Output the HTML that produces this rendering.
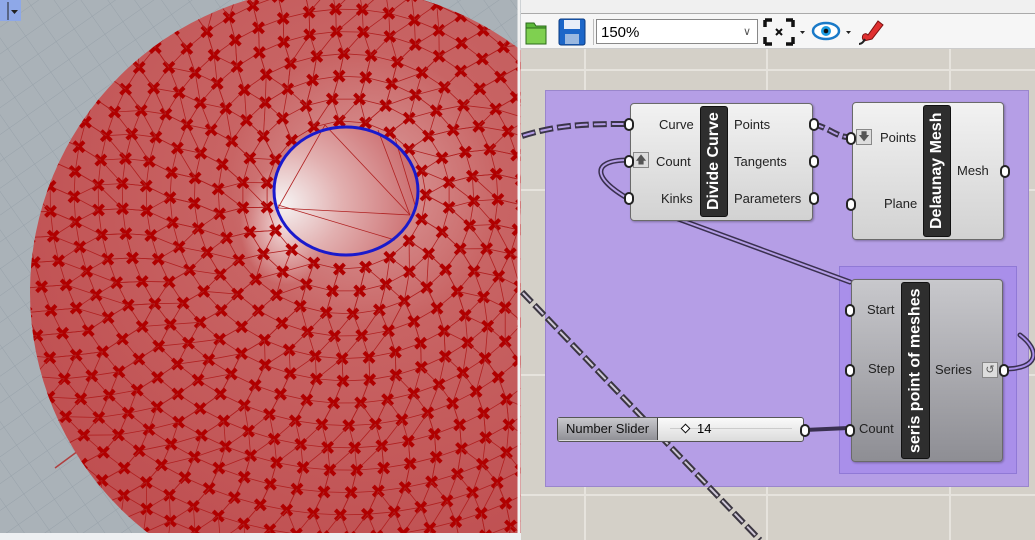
<!DOCTYPE html>
<html><head><meta charset="utf-8"><style>
html,body{margin:0;width:1035px;height:540px;overflow:hidden}
body{position:relative;font-family:"Liberation Sans",sans-serif;background:#d4d0c8}
.abs{position:absolute}
.comp{position:absolute;background:linear-gradient(#f2f2f2,#d2d2d2);border:1px solid #6a6a6a;border-radius:4px;box-shadow:1px 1px 2px rgba(0,0,0,.3)}
.bar{position:absolute;background:#2e2e2e;border:1px solid #111;border-radius:3px;color:#fff;font-weight:bold;font-size:16px;writing-mode:vertical-rl;transform:rotate(180deg);display:flex;align-items:center;justify-content:center;white-space:nowrap}
.lbl{position:absolute;font-size:13px;color:#222}
.port{position:absolute;width:6px;height:9px;border:2px solid #222;border-radius:5px;background:#fff}
</style></head><body>
<svg class="abs" style="left:0;top:0" width="521" height="540" viewBox="0 0 521 540">
<defs>
<pattern id="g" width="22" height="22" patternUnits="userSpaceOnUse" patternTransform="rotate(-35)">
<path d="M0 0H22M0 0V22" stroke="#98a2aa" stroke-width="1" fill="none"/></pattern>
<radialGradient id="dome" cx="0.55" cy="0.33" r="0.75">
<stop offset="0" stop-color="#dca0a0"/><stop offset="0.3" stop-color="#c86464"/><stop offset="1" stop-color="#bd4a4c"/></radialGradient>
<radialGradient id="hole" cx="0.05" cy="0.6" r="0.95">
<stop offset="0" stop-color="#f6f4f4"/><stop offset="0.45" stop-color="#e2b0b0"/><stop offset="1" stop-color="#cc6e70"/></radialGradient>
<radialGradient id="glow" cx="0.5" cy="0.5" r="0.5">
<stop offset="0" stop-color="#fff" stop-opacity="0.75"/><stop offset="1" stop-color="#fff" stop-opacity="0"/></radialGradient>
<clipPath id="dc"><circle cx="335" cy="292" r="305"/></clipPath>
</defs>
<rect width="521" height="540" fill="#aab2b8"/>
<rect width="521" height="540" fill="url(#g)"/>
<line x1="55" y1="468" x2="120" y2="420" stroke="#b04040" stroke-width="1.5"/>
<circle cx="335" cy="292" r="305" fill="url(#dome)"/>
<ellipse cx="285" cy="225" rx="45" ry="60" fill="url(#glow)"/>
<g id="mesh" clip-path="url(#dc)" stroke="#b02020" stroke-width="0.8" fill="none"></g>
<ellipse cx="346" cy="191" rx="72" ry="63" fill="url(#hole)"/>
<g stroke="#b02020" stroke-width="0.8">
<line x1="325" y1="125" x2="278" y2="208"/><line x1="325" y1="125" x2="410" y2="215"/><line x1="278" y1="208" x2="410" y2="215"/><line x1="278" y1="205" x2="395" y2="240"/><line x1="378" y1="130" x2="410" y2="215"/><line x1="395" y1="138" x2="415" y2="205"/>
</g>
<ellipse cx="346" cy="191" rx="72" ry="64" fill="none" stroke="#1a1acc" stroke-width="3"/>
<line x1="519" y1="0" x2="519" y2="540" stroke="#f2f2f2" stroke-width="3"/>
<rect x="0" y="533" width="521" height="7" fill="#eef0f2"/>
<rect x="0" y="0" width="21" height="21" fill="#8ea8e8"/>
<line x1="8" y1="2" x2="8" y2="20" stroke="#222"/>
<path d="M11 10h7l-3.5 4z" fill="#222"/>
</svg>
<script>
(function(){var g=document.getElementById('mesh');var s='';
var cx=346,cy=195;var prev=null;
for(var k=0;k<17;k++){var r=80+k*24;var n=Math.round(2*Math.PI*r/27);var pts=[];
for(var i=0;i<n;i++){var a=i/n*2*Math.PI+k*0.13;pts.push([cx+r*Math.cos(a),cy+r*Math.sin(a)*0.93]);}
for(var i=0;i<n;i++){var p=pts[i],q=pts[(i+1)%n];s+='<line x1="'+p[0].toFixed(1)+'" y1="'+p[1].toFixed(1)+'" x2="'+q[0].toFixed(1)+'" y2="'+q[1].toFixed(1)+'"/>';
if(prev){var best=null,bd=1e9;for(var j=0;j<prev.length;j++){var d=(prev[j][0]-p[0])**2+(prev[j][1]-p[1])**2;if(d<bd){bd=d;best=prev[j];}}
s+='<line x1="'+p[0].toFixed(1)+'" y1="'+p[1].toFixed(1)+'" x2="'+best[0].toFixed(1)+'" y2="'+best[1].toFixed(1)+'"/>';
var m=[(p[0]+q[0])/2,(p[1]+q[1])/2];bd=1e9;for(var j=0;j<prev.length;j++){var d=(prev[j][0]-m[0])**2+(prev[j][1]-m[1])**2;if(d<bd){bd=d;best=prev[j];}}
s+='<line x1="'+q[0].toFixed(1)+'" y1="'+q[1].toFixed(1)+'" x2="'+best[0].toFixed(1)+'" y2="'+best[1].toFixed(1)+'"/>';}}
for(var i=0;i<n;i++){var p=pts[i];s+='<path d="M'+(p[0]-5).toFixed(1)+' '+(p[1]-5).toFixed(1)+'l10 10m0 -10l-10 10" stroke="#b00000" stroke-width="4"/>';}
prev=pts;}
g.innerHTML=s;})();
</script>
<div class="abs" style="left:521px;top:0;width:514px;height:13px;background:#f0f0f0;border-bottom:1px solid #aaa"></div>
<div class="abs" style="left:521px;top:14px;width:514px;height:34px;background:#f6f6f6;border-bottom:1px solid #ccc"></div>
<svg class="abs" style="left:521px;top:14px" width="514" height="34">
<path d="M5 9h8l2 3h10v18H5z" fill="#5cb83a" stroke="#2a6a1a"/><rect x="5" y="14" width="20" height="16" fill="#7fd050" stroke="#2a6a1a"/>
<rect x="38" y="5" width="26" height="26" rx="2" fill="#1c66c8" stroke="#0a3a80"/><rect x="43" y="6" width="16" height="9" fill="#e8eef8"/><rect x="44" y="20" width="14" height="10" fill="#9ab8e0"/>
<rect x="72" y="5" width="1" height="26" fill="#bbb"/>
<path d="M244 6v7M244 6h7M272 6v7M272 6h-7M244 30v-7M244 30h7M272 30v-7M272 30h-7" stroke="#111" stroke-width="3.5" fill="none"/><path d="M255 15l6 6m0-6l-6 6" stroke="#111" stroke-width="2"/>
<path d="M279 17h5l-2.5 3z" fill="#222"/>
<ellipse cx="305" cy="17" rx="13" ry="8" fill="#fff" stroke="#1a7ac8" stroke-width="2.5"/><circle cx="305" cy="17" r="5" fill="#1a9ae0"/><circle cx="305" cy="17" r="2.3" fill="#111"/>
<path d="M325 17h5l-2.5 3z" fill="#222"/>
<path d="M343 27c-4-4 0-10 4-6l10-14 5 4-11 14z" fill="#e03030" stroke="#7a1010"/><path d="M338 30c3 0 5-3 6-5" stroke="#222" stroke-width="2" fill="none"/>
</svg>
<div class="abs" style="left:596px;top:19px;width:162px;height:25px;background:#fff;border:1px solid #888;font-size:15px;line-height:25px;padding-left:4px;box-sizing:border-box">150%<span style="position:absolute;right:6px;font-size:11px;color:#555">&#8744;</span></div>
<svg class="abs" style="left:521px;top:49px" width="514" height="491">
<g stroke="#e6e3dd" stroke-width="2"><line x1="64" y1="0" x2="64" y2="491"/><line x1="246" y1="0" x2="246" y2="491"/><line x1="429" y1="0" x2="429" y2="491"/><line x1="0" y1="21" x2="514" y2="21"/><line x1="0" y1="141" x2="514" y2="141"/><line x1="0" y1="326" x2="514" y2="326"/><line x1="0" y1="446" x2="514" y2="446"/></g>
</svg>
<div class="abs" style="left:545px;top:90px;width:482px;height:395px;background:#b59ee6;border:1px solid #9a86cc"></div>
<div class="abs" style="left:839px;top:266px;width:176px;height:206px;background:#a98fea;border:1px solid #9079d6"></div>
<svg class="abs" style="left:0;top:0" width="1035" height="540">
<g fill="none" stroke-linecap="round">
<path d="M522 136C560 124 590 124 628 124" stroke="#3a3448" stroke-width="6" stroke-dasharray="14 4" stroke-linecap="butt"/><path d="M522 136C560 124 590 124 628 124" stroke="#b59ee6" stroke-width="2" stroke-dasharray="10 8" stroke-dashoffset="-2"/>
<path d="M813 124C830 128 838 138 850 137" stroke="#3a3448" stroke-width="6" stroke-dasharray="12 4" stroke-linecap="butt"/><path d="M813 124C830 128 838 138 850 137" stroke="#b59ee6" stroke-width="2" stroke-dasharray="8 8" stroke-dashoffset="-2"/>
<path d="M522 292L760 540" stroke="#3a3540" stroke-width="6" stroke-dasharray="14 4" stroke-linecap="butt"/><path d="M522 292L760 540" stroke="#cfc8d8" stroke-width="2" stroke-dasharray="10 8" stroke-dashoffset="-2"/>
<path d="M628 160C590 160 590 180 640 205L850 282" stroke="#3a3050" stroke-width="5"/><path d="M628 160C590 160 590 180 640 205L850 282" stroke="#b59ee6" stroke-width="2"/>
<path d="M1004 369C1040 369 1040 350 1020 335" stroke="#3a3050" stroke-width="5"/><path d="M1004 369C1040 369 1040 350 1020 335" stroke="#a98fea" stroke-width="2"/>
<path d="M805 430L848 428" stroke="#3a3050" stroke-width="4"/>
</g></svg>
<div class="comp" style="left:630px;top:103px;width:181px;height:116px"></div>
<div class="bar" style="left:700px;top:106px;width:26px;height:109px">Divide Curve</div>
<div class="lbl" style="left:659px;top:117px">Curve</div><div class="lbl" style="left:656px;top:154px">Count</div><div class="lbl" style="left:661px;top:191px">Kinks</div>
<div class="lbl" style="left:734px;top:117px">Points</div><div class="lbl" style="left:734px;top:154px">Tangents</div><div class="lbl" style="left:734px;top:191px">Parameters</div>
<div class="abs" style="left:633px;top:152px;width:14px;height:14px;background:#ddd;border:1px solid #888;font-size:11px;text-align:center;line-height:14px;color:#555">&#129093;</div>
<div class="port" style="left:624px;top:118px"></div><div class="port" style="left:624px;top:155px"></div><div class="port" style="left:624px;top:192px"></div>
<div class="port" style="left:809px;top:118px"></div><div class="port" style="left:809px;top:155px"></div><div class="port" style="left:809px;top:192px"></div>
<div class="comp" style="left:852px;top:102px;width:150px;height:136px"></div>
<div class="bar" style="left:923px;top:105px;width:26px;height:130px">Delaunay Mesh</div>
<div class="lbl" style="left:880px;top:130px">Points</div><div class="lbl" style="left:884px;top:196px">Plane</div><div class="lbl" style="left:957px;top:163px">Mesh</div>
<div class="abs" style="left:856px;top:129px;width:14px;height:14px;background:#ddd;border:1px solid #888;font-size:11px;text-align:center;line-height:14px;color:#555">&#129095;</div>
<div class="port" style="left:846px;top:132px"></div><div class="port" style="left:846px;top:198px"></div><div class="port" style="left:1000px;top:165px"></div>
<div class="comp" style="left:851px;top:279px;width:150px;height:181px;background:linear-gradient(#c8c8cc,#8e8e94)"></div>
<div class="bar" style="left:901px;top:282px;width:27px;height:175px">seris point of meshes</div>
<div class="lbl" style="left:867px;top:302px">Start</div><div class="lbl" style="left:868px;top:361px">Step</div><div class="lbl" style="left:859px;top:421px">Count</div><div class="lbl" style="left:935px;top:362px">Series</div>
<div class="abs" style="left:982px;top:362px;width:14px;height:14px;background:#ddd;border:1px solid #888;font-size:11px;text-align:center;line-height:14px;color:#555">&#8634;</div>
<div class="port" style="left:845px;top:304px"></div><div class="port" style="left:845px;top:364px"></div><div class="port" style="left:845px;top:424px"></div><div class="port" style="left:999px;top:364px"></div>
<div class="abs" style="left:557px;top:417px;width:245px;height:23px;background:linear-gradient(#fafafa,#dcdcdc);border:1px solid #555;border-radius:3px"></div>
<div class="abs" style="left:558px;top:418px;width:99px;height:22px;background:linear-gradient(#c8c8cc,#909096);border-right:1px solid #444;font-size:13px;line-height:22px;text-align:center;color:#111">Number Slider</div>
<div class="abs" style="left:670px;top:428px;width:122px;height:1px;background:#ccc"></div>
<div class="abs" style="left:682px;top:425px;width:5px;height:5px;border:1.5px solid #111;transform:rotate(45deg);background:#fff"></div>
<div class="abs" style="left:697px;top:421px;font-size:13px">14</div>
<div class="port" style="left:800px;top:424px"></div>
</body></html>
